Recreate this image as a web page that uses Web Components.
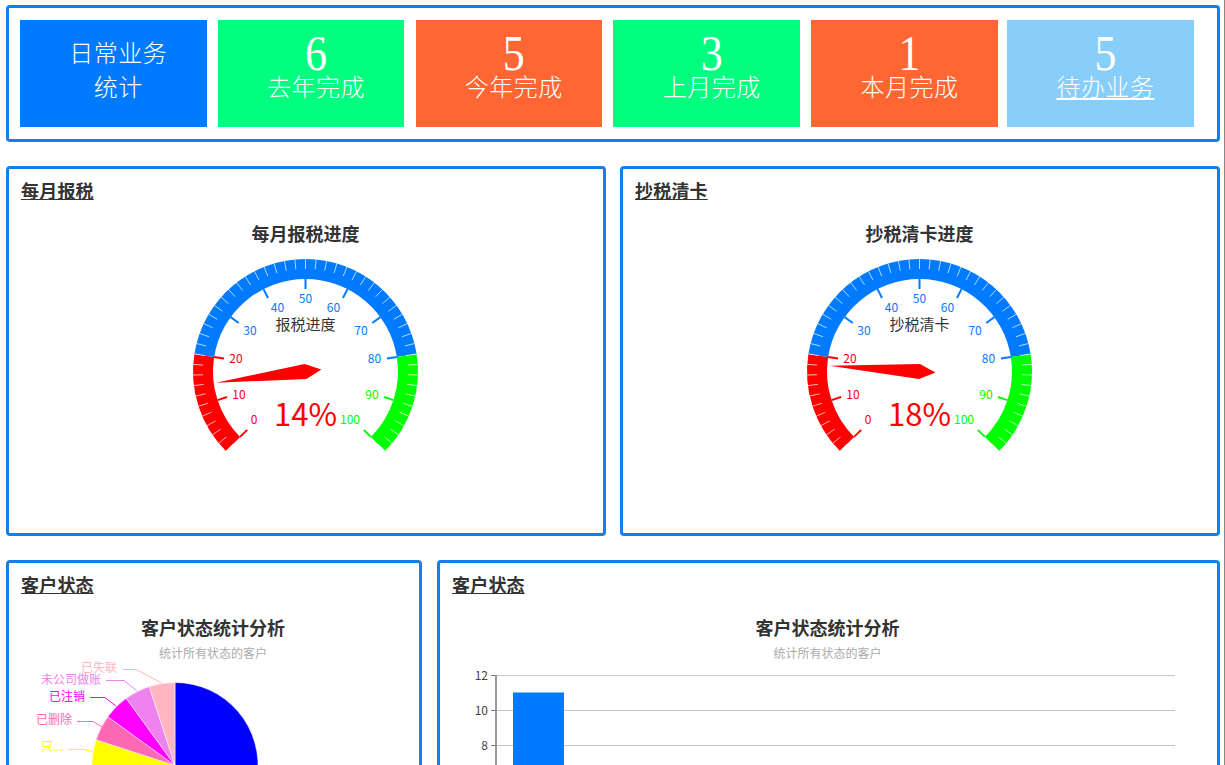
<!DOCTYPE html>
<html lang="zh">
<head>
<meta charset="utf-8">
<title>统计</title>
<style>
  html, body { margin: 0; height: 100%; overflow: hidden; background: #fff; }
  body { font-family: "Liberation Serif", "Noto Sans CJK SC", serif; }
</style>
</head>
<body>
<x-dashboard>
  <x-panel slot="stats" plain>
    <x-stat color="#007bff" title-only><span slot="label">日常业务<br>统计</span></x-stat>
    <x-stat color="#00ff7f" value="6"><span slot="label">去年完成</span></x-stat>
    <x-stat color="#ff6633" value="5"><span slot="label">今年完成</span></x-stat>
    <x-stat color="#00ff7f" value="3"><span slot="label">上月完成</span></x-stat>
    <x-stat color="#ff6633" value="1"><span slot="label">本月完成</span></x-stat>
    <x-stat color="#87cefa" value="5" link><span slot="label">待办业务</span></x-stat>
  </x-panel>
  <x-panel slot="gauge-a" heading="每月报税"><x-gauge title="每月报税进度" name="报税进度" value="14"></x-gauge></x-panel>
  <x-panel slot="gauge-b" heading="抄税清卡"><x-gauge title="抄税清卡进度" name="抄税清卡" value="18"></x-gauge></x-panel>
  <x-panel slot="pie" heading="客户状态"><x-pie></x-pie></x-panel>
  <x-panel slot="bar" heading="客户状态"><x-bars></x-bars></x-panel>
</x-dashboard>

<script>
const SANS = '"Noto Sans CJK SC", "Liberation Sans", sans-serif';
const BLUE = '#007bff';

class XDashboard extends HTMLElement {
  constructor() {
    super();
    this.attachShadow({ mode: 'open' }).innerHTML = `
      <style>
        :host { display: block; box-sizing: border-box; width: 1225px; height: 765px; padding: 5px 4px 0 6px; border-right: 1px solid #888; overflow: hidden; }
        .row { display: grid; gap: 14px; margin-bottom: 24px; }
        .two { grid-template-columns: 600px 600px; }
        .mixed { grid-template-columns: 416px 783px; gap: 15px; }
      </style>
      <div class="row"><slot name="stats"></slot></div>
      <div class="row two"><slot name="gauge-a"></slot><slot name="gauge-b"></slot></div>
      <div class="row mixed"><slot name="pie"></slot><slot name="bar"></slot></div>
    `;
  }
}

class XPanel extends HTMLElement {
  constructor() {
    super();
    const heading = this.getAttribute('heading');
    const plain = this.hasAttribute('plain');
    this.attachShadow({ mode: 'open' }).innerHTML = `
      <style>
        :host { display: block; box-sizing: border-box; border: 3px solid #127fed; border-radius: 4px; background: #fff; }
        .head { margin: 0; padding: 11px 0 0 12px; height: 27px; font: bold 18px/25px "Liberation Serif", "Noto Sans CJK SC", serif; color: #333; letter-spacing: .2px; }
        .head span { text-decoration: underline; }
        .stats { display: flex; gap: 11.2px; padding: 12px 0 12px 11px; }
      </style>
      ${heading ? `<h3 class="head"><span>${heading}</span></h3>` : ''}
      <div class="${plain ? 'stats' : 'body'}"><slot></slot></div>
    `;
  }
}

class XStat extends HTMLElement {
  constructor() {
    super();
    const value = this.getAttribute('value');
    const color = this.getAttribute('color');
    this.attachShadow({ mode: 'open' }).innerHTML = `
      <style>
        :host { display: flex; flex-direction: column; align-items: center; justify-content: center; box-sizing: border-box; width: 186.6px; height: 107px; padding: 0 0 5px 10px; background: ${color}; color: #fff; text-align: center; font-family: "Liberation Serif", "Noto Sans CJK SC", serif; font-weight: 300; }
        :host(:last-child) { margin-left: -1.8px; }
        .value { font-size: 44px; line-height: 28px; margin: 3px 0; transform: scaleY(1.17); }
        .label { font-size: 24px; line-height: 34px; letter-spacing: .5px; }
        :host([link]) .label { text-decoration: underline; }
      </style>
      ${value ? `<div class="value">${value}</div>` : ''}
      <div class="label"><slot name="label"></slot></div>
    `;
  }
}

// angle in degrees from straight up, clockwise
function polar(cx, cy, r, deg) {
  const a = (deg - 90) * Math.PI / 180;
  return [cx + r * Math.cos(a), cy + r * Math.sin(a)];
}

function sector(cx, cy, r1, r2, from, to) {
  const large = to - from > 180 ? 1 : 0;
  const a = polar(cx, cy, r2, from), b = polar(cx, cy, r2, to);
  const c = polar(cx, cy, r1, to), d = polar(cx, cy, r1, from);
  return `M${a} A${r2} ${r2} 0 ${large} 1 ${b} L${c} A${r1} ${r1} 0 ${large} 0 ${d} Z`;
}

// label centres relative to the dial centre, read off the reference
const GAUGE_LABELS = {
  0: [-51.5, 48], 10: [-66.5, 23], 20: [-69.5, -13], 30: [-55.5, -41], 40: [-28, -64], 50: [0, -73],
  60: [28, -64], 70: [55.5, -41], 80: [69, -13], 90: [66.5, 23], 100: [44.5, 48]
};

class XGauge extends HTMLElement {
  constructor() {
    super();
    const title = this.getAttribute('title');
    const name = this.getAttribute('name');
    const value = Number(this.getAttribute('value'));
    const cx = 296.5, cy = 164.5;
    const deg = v => -135 + v * 2.7;
    const colorOf = v => (v <= 20 ? '#ff0000' : v < 80 ? BLUE : '#00ff00');
    let marks = '';
    [[0, 20, '#ff0000'], [20, 80, BLUE], [80, 100, '#00ff00']].forEach(([a, b, c]) => {
      marks += `<path d="${sector(cx, cy, 92.5, 112.5, deg(a), deg(b))}" fill="${c}"/>`;
    });
    for (let v = 0; v <= 100; v += 2) {
      const p = polar(cx, cy, 112.5, deg(v)), q = polar(cx, cy, 102.5, deg(v));
      marks += `<line x1="${p[0]}" y1="${p[1]}" x2="${q[0]}" y2="${q[1]}" stroke="#fff" stroke-opacity=".7"/>`;
    }
    for (let v = 0; v <= 100; v += 10) {
      const p = polar(cx, cy, 92.5, deg(v)), q = polar(cx, cy, 82.5, deg(v));
      const [dx, dy] = GAUGE_LABELS[v];
      const c = v < 30 ? '#ff0000' : v < 90 ? BLUE : '#00ff00';
      marks += `<line x1="${p[0]}" y1="${p[1]}" x2="${q[0]}" y2="${q[1]}" stroke="${c}" stroke-width="2"/>`;
      marks += `<text x="${cx + dx}" y="${cy + dy + 4}" text-anchor="middle" font-size="12" fill="${c}">${v}</text>`;
    }
    const a = deg(value);
    this.attachShadow({ mode: 'open' }).innerHTML = `
      <style>
        :host { display: block; height: 326px; }
        svg { display: block; font-family: ${SANS}; }
      </style>
      <svg width="594" height="326" viewBox="0 0 594 326">
        <text x="${cx}" y="33.5" text-anchor="middle" font-size="18" font-weight="bold" fill="#333">${title}</text>
        ${marks}
        <text x="${cx}" y="123" text-anchor="middle" font-size="15" fill="#333">${name}</text>
        <polygon points="${cx},${cy - 90} ${cx + 7.5},${cy} ${cx},${cy + 16} ${cx - 7.5},${cy}" fill="#ff0000" transform="rotate(${a} ${cx} ${cy})"/>
        <text x="${cx}" y="219" text-anchor="middle" font-size="31" fill="${colorOf(value)}">${value}%</text>
      </svg>
    `;
  }
}

class XPie extends HTMLElement {
  constructor() {
    super();
    const cx = 166, cy = 164.5;
    const slices = [
      [0, 198, '#0000ff'], [198, 288, '#ffff00'], [288, 306, '#ff69b4'],
      [306, 324, '#ff00ff'], [324, 342, '#ee82ee'], [342, 360, '#ffb6c1']
    ];
    // label right edge, centre line, colour, connector points (from the reference, panel-relative)
    const labels = [
      ['已失联', 108, 67, '#ffb6c1', '114,68.5 127,68.5 153,82'],
      ['未公司做账', 92, 79, '#ee82ee', '97,79.5 115,79.5 128,90'],
      ['已注销', 76, 96, '#ff00ff', '81,96.5 96,96.5 107,105'],
      ['已删除', 63, 119, '#ff69b4', '68,120.5 84,120.5 93,126'],
      ['只...', 54, 146, '#ffff00', '59,148.5 76,148.5 84,151']
    ];
    const wedges = slices.map(([a, b, c]) => {
      const p = polar(cx, cy, 83, a), q = polar(cx, cy, 83, b);
      return `<path d="M${cx} ${cy} L${p} A83 83 0 ${b - a > 180 ? 1 : 0} 1 ${q} Z" fill="${c}" stroke="#fff" stroke-width=".5"/>`;
    }).join('');
    const tags = labels.map(([t, x, y, c, pts]) => `
      <polyline points="${pts}" fill="none" stroke="${c}"/>
      <text x="${x}" y="${y + 4}" text-anchor="end" font-size="12" fill="${c}">${t}</text>`).join('');
    this.attachShadow({ mode: 'open' }).innerHTML = `
      <style>
        :host { display: block; height: 300px; }
        svg { display: block; font-family: ${SANS}; }
      </style>
      <svg width="410" height="300" viewBox="0 0 410 300">
        <text x="204" y="33.5" text-anchor="middle" font-size="18" font-weight="bold" fill="#333">客户状态统计分析</text>
        <text x="204" y="57" text-anchor="middle" font-size="12" fill="#aaa">统计所有状态的客户</text>
        ${wedges}
        ${tags}
      </svg>
    `;
  }
}

class XBars extends HTMLElement {
  constructor() {
    super();
    const cx = 387.5, left = 56, right = 735, top = 74.5;
    let axis = '';
    // only 12, 10 and 8 fall inside the window
    for (let v = 12; v >= 8; v -= 2) {
      const y = top + (12 - v) * 17.5;
      const ys = Math.floor(y) + .5;
      axis += `<line x1="${left}" y1="${ys}" x2="${right}" y2="${ys}" stroke="#c4c4c4"/>`;
      axis += `<line x1="${left - 5}" y1="${ys}" x2="${left}" y2="${ys}" stroke="#777"/>`;
      axis += `<text x="${left - 8}" y="${y + 4}" text-anchor="end" font-size="12" fill="#444">${v}</text>`;
    }
    this.attachShadow({ mode: 'open' }).innerHTML = `
      <style>
        :host { display: block; height: 300px; }
        svg { display: block; font-family: ${SANS}; }
      </style>
      <svg width="777" height="300" viewBox="0 0 777 300">
        <text x="${cx}" y="33.5" text-anchor="middle" font-size="18" font-weight="bold" fill="#333">客户状态统计分析</text>
        <text x="${cx}" y="57" text-anchor="middle" font-size="12" fill="#aaa">统计所有状态的客户</text>
        ${axis}
        <line x1="${left}" y1="${top - .5}" x2="${left}" y2="300" stroke="#999" stroke-width="2"/>
        <rect x="73" y="91.5" width="51" height="210" fill="${BLUE}"/>
      </svg>
    `;
  }
}

customElements.define('x-dashboard', XDashboard);
customElements.define('x-panel', XPanel);
customElements.define('x-stat', XStat);
customElements.define('x-gauge', XGauge);
customElements.define('x-pie', XPie);
customElements.define('x-bars', XBars);
</script>
</body>
</html>
